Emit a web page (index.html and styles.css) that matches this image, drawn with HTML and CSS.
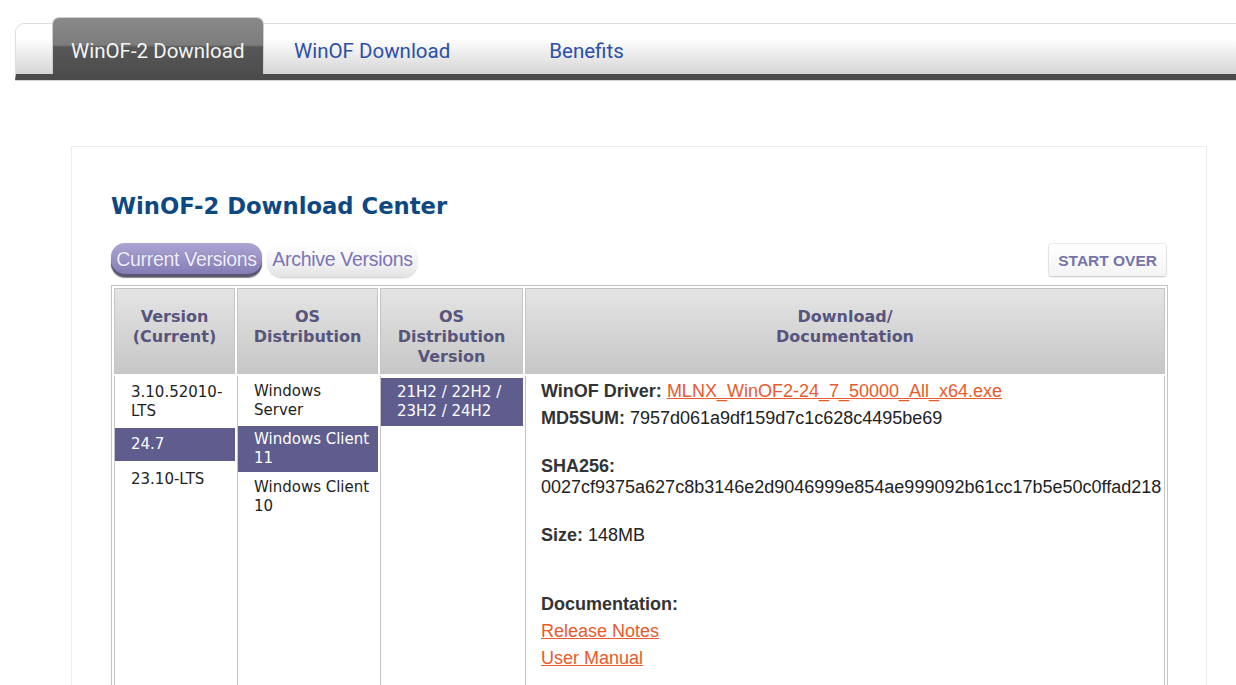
FILE: index.html
```html
<!DOCTYPE html>
<html lang="en">
<head>
  <meta charset="UTF-8" />
  <meta name="viewport" content="width=device-width, initial-scale=1.0" />
  <title>WinOF-2 Download Center</title>
  <link rel="stylesheet" href="styles.css">
</head>
<body>
  <div class="tabs">
    <a class="tab active" href="#">WinOF-2 Download</a>
    <a class="tab tab-winof" href="#">WinOF Download</a>
    <a class="tab tab-benefits" href="#">Benefits</a>
  </div>

  <div class="card">
    <h1>WinOF-2 Download Center</h1>

    <div class="toolbar">
      <div class="versions">
        <a class="pill pill-on" href="#">Current Versions</a>
        <a class="pill pill-off" href="#">Archive Versions</a>
      </div>
      <a class="start-over" href="#">START OVER</a>
    </div>

    <table class="dl">
      <thead>
        <tr>
          <th class="c1">Version<br>(Current)</th>
          <th class="c2">OS<br>Distribution</th>
          <th class="c3">OS<br>Distribution<br>Version</th>
          <th class="c4">Download/<br>Documentation</th>
        </tr>
      </thead>
      <tbody>
        <tr>
          <td>
            <ul class="opts">
              <li>3.10.52010-<br>LTS</li>
              <li class="sel one">24.7</li>
              <li class="one">23.10-LTS</li>
            </ul>
          </td>
          <td>
            <ul class="opts tight">
              <li>Windows<br>Server</li>
              <li class="sel">Windows Client<br>11</li>
              <li>Windows Client<br>10</li>
            </ul>
          </td>
          <td>
            <ul class="opts">
              <li class="sel">21H2 / 22H2 /<br>23H2 / 24H2</li>
            </ul>
          </td>
          <td class="files">
            <p class="row"><b>WinOF Driver:</b> <a href="#">MLNX_WinOF2-24_7_50000_All_x64.exe</a></p>
            <p class="row"><b>MD5SUM:</b> 7957d061a9df159d7c1c628c4495be69</p>
            <p class="blk sha"><b>SHA256:</b><br>0027cf9375a627c8b3146e2d9046999e854ae999092b61cc17b5e50c0ffad218</p>
            <p class="blk size"><b>Size:</b> 148MB</p>
            <p class="row docs"><b>Documentation:</b></p>
            <p class="row"><a href="#">Release Notes</a></p>
            <p class="row"><a href="#">User Manual</a></p>
          </td>
        </tr>
      </tbody>
    </table>
  </div>
</body>
</html>
```

FILE: styles.css
```css
body {
  margin: 0;
  background: #fff;
  font-family: "Liberation Sans", Arial, sans-serif;
  color: #222;
}

/* top tabs */
.tabs {
  display: flex;
  height: 50px;
  margin: 23px 0 0 15px;
  border-top: 1px solid #dedede;
  border-left: 1px solid #dedede;
  border-top-left-radius: 9px;
  border-bottom: 6px solid #4b4b4b;
  box-shadow: 0 1px 0 #d4d4d4;
  background: linear-gradient(#fff 30%, #ececec 60%, #d6d6d6);
}

.tab {
  display: flex;
  align-items: center;
  padding: 4px 18px 0;
  font-family: Roboto, "Liberation Sans", sans-serif;
  font-size: 20.5px;
  color: #2c4fa8;
  text-decoration: none;
}

.tab.active {
  margin: -7px 0 0 36px;
  padding-top: 10px;
  width: 174px;
  color: #f4f4f4;
  border: 1px solid #cfcfcf;
  border-bottom: 0;
  border-radius: 7px 7px 0 0;
  background: linear-gradient(#8a8a8a, #7c7c7c 48%, #575757 52%, #4d4d4d);
}

.tab-winof { margin-left: 12px; }
.tab-benefits { margin-left: 63px; }

/* content card */
.card {
  margin: 66px 29px 0 71px;
  padding: 0 38px 0 39px;
  min-height: 560px;
  border: 1px solid #ececec;
  border-bottom: 0;
}

h1 {
  margin: 46px 0 24px;
  font-family: "DejaVu Sans", Verdana, sans-serif;
  font-size: 22.7px;
  font-weight: bold;
  color: #0d4882;
}

.toolbar {
  display: flex;
  justify-content: space-between;
  align-items: center;
  height: 34px;
  margin-bottom: 8px;
}

.versions {
  display: flex;
  gap: 6px;
}

.pill {
  display: block;
  height: 34px;
  line-height: 33px;
  border-radius: 14px;
  font-size: 19.5px;
  letter-spacing: -0.3px;
  white-space: nowrap;
  text-align: center;
  text-decoration: none;
  box-sizing: border-box;
}

.pill-on {
  width: 151px;
  color: #f1f0fa;
  background: linear-gradient(#aba4d2, #938cc2 60%, #7f78ad);
  box-shadow: inset 0 -3px 0 #5a5670, 0 1px 1px #888;
  text-shadow: 0 0 1px rgba(90, 80, 140, 0.6);
}

.pill-off {
  width: 149px;
  color: #7b74b8;
  background: linear-gradient(#fff, #f2f2f2 60%, #e2e2e2);
  box-shadow: 0 1px 2px #c8c8c8;
}

.start-over {
  display: block;
  margin-right: 2px;
  padding: 0 9px;
  height: 32px;
  line-height: 33px;
  font-size: 15.5px;
  font-weight: bold;
  color: #7673ab;
  text-decoration: none;
  border-radius: 3px;
  background: linear-gradient(#fff, #f4f4f4);
  box-shadow: 0 1px 2px #c6c6c6, 0 0 0 1px #ececec;
}

/* download table */
.dl {
  width: 100%;
  border: 1px solid #c4c4c4;
  border-spacing: 2px;
  font-family: "DejaVu Sans", Verdana, sans-serif;
}

.dl th {
  height: 66px;
  padding: 18px 6px 0;
  border: 1px solid #c4c4c4;
  background: linear-gradient(#e4e4e4, #c7c7c7);
  color: #57557c;
  font-size: 16px;
  line-height: 20px;
  vertical-align: top;
}

.dl .c1 { width: 107px; }
.dl .c2 { width: 127px; }
.dl .c3 { width: 129px; }

.dl td {
  height: 318px;
  padding: 2px 0 0;
  border-left: 1px solid #c4c4c4;
  vertical-align: top;
}

.dl td:last-child {
  border-right: 1px solid #c4c4c4;
}

.opts {
  list-style: none;
  margin: 0;
  padding: 0;
}

.opts li {
  padding: 5px 2px 5px 16px;
  margin-bottom: 2px;
  font-size: 15px;
  line-height: 19px;
  color: #1e1e1e;
  white-space: nowrap;
}

.opts.tight li {
  padding-top: 4px;
  padding-bottom: 4px;
}

.opts li.one {
  padding: 7px 2px 7px 16px;
}

.opts li.sel {
  background: #5e5d8d;
  color: #fff;
}

.dl .files {
  padding-left: 15px;
  font-family: "Liberation Sans", Arial, sans-serif;
  font-size: 18px;
  color: #222;
}

.files p {
  margin: 0;
}

.files b {
  color: #333;
}

.files a {
  color: #e95a2c;
}

.files .row { line-height: 27px; }
.files .blk { line-height: 21px; }
.files .sha { margin-top: 24px; }
.files .size { margin-top: 27px; }
.files .docs { margin-top: 45px; }
```
